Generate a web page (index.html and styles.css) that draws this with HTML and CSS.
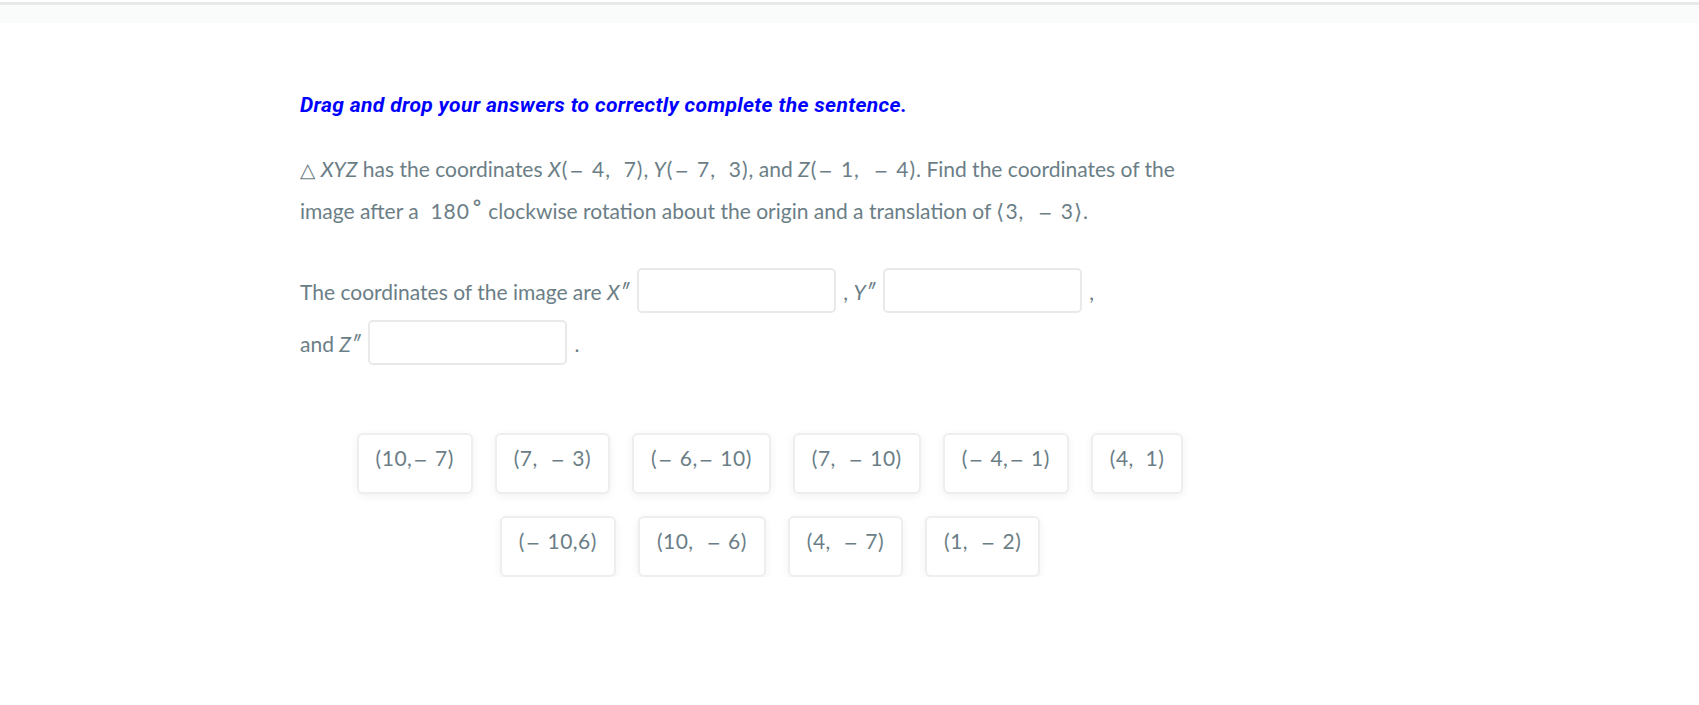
FILE: index.html
```html
<!DOCTYPE html>
<html lang="en">
<head>
<meta charset="utf-8">
<title>Drag and drop</title>
<link rel="stylesheet" href="styles.css">
</head>
<body>
<div class="topline"></div>
<div class="topband"></div>
<main class="content">
  <h1 class="instruction">Drag and drop your answers to correctly complete the sentence.</h1>
  <p class="question"><span class="tri">△</span> <i class="mi">XYZ</i> has the coordinates <span class="m"><i class="mi">X</i>(<span class="mn">−</span> 4,&nbsp; 7)</span>, <span class="m"><i class="mi">Y</i>(<span class="mn">−</span> 7,&nbsp; 3)</span>, and <span class="m"><i class="mi">Z</i>(<span class="mn">−</span> 1,&nbsp; <span class="mn">−</span> 4)</span>. Find the coordinates of the image after a <span class="m">&nbsp;180<b class="deg">°</b></span> clockwise rotation about the origin and a translation of <span class="m">⟨3,&nbsp; <span class="mn">−</span> 3⟩</span>.</p>
  <p class="sentence">The coordinates of the image are <i class="mi">X</i><span class="pp">′′</span> <span class="drop"></span> , <i class="mi">Y</i><span class="pp">′′</span> <span class="drop"></span> , <span class="nowrap">and <i class="mi">Z</i><span class="pp">′′</span> <span class="drop"></span> .</span></p>
  <div class="tiles">
    <div class="tile">(10,<span class="mn">−</span> 7)</div>
    <div class="tile">(7,&nbsp; <span class="mn">−</span> 3)</div>
    <div class="tile">(<span class="mn">−</span> 6,<span class="mn">−</span> 10)</div>
    <div class="tile">(7,&nbsp; <span class="mn">−</span> 10)</div>
    <div class="tile">(<span class="mn">−</span> 4,<span class="mn">−</span> 1)</div>
    <div class="tile">(4,&nbsp; 1)</div>
    <div class="tile">(<span class="mn">−</span> 10,6)</div>
    <div class="tile">(10,&nbsp; <span class="mn">−</span> 6)</div>
    <div class="tile">(4,&nbsp; <span class="mn">−</span> 7)</div>
    <div class="tile">(1,&nbsp; <span class="mn">−</span> 2)</div>
  </div>
</main>
</body>
</html>
```

FILE: styles.css
```css
html, body {
  margin: 0;
  padding: 0;
  background: #ffffff;
}
body {
  font-family: Lato, "Noto Sans", sans-serif;
  color: #6b7e86;
}
.topline {
  margin-top: 2px;
  height: 3px;
  background: #e8e9e9;
}
.topband {
  height: 18px;
  background: #f9fcfb;
}
.content {
  margin-left: 300px;
  width: 940px;
}
.instruction {
  margin: 68px 0 0 0;
  font-family: Roboto, "Liberation Sans", sans-serif;
  font-size: 21px;
  font-weight: 700;
  font-style: italic;
  letter-spacing: 0.35px;
  line-height: 28px;
  color: #0000ff;
}
.question {
  margin: 30px 0 0 0;
  width: 890px;
  font-size: 21px;
  line-height: 39px;
}
.m {
  letter-spacing: 1px;
}
.tri {
  font-family: "DejaVu Sans", sans-serif;
  font-size: 20px;
}
.mi {
  font-style: italic;
}
.mn {
  font-family: "DejaVu Sans", sans-serif;
  font-weight: 400;
  font-size: 17px;
  margin: 0 1px;
}
.deg {
  font-family: "DejaVu Sans", sans-serif;
  font-weight: 700;
  font-size: 20px;
  position: relative;
  top: -5px;
  margin-left: 2px;
}
.sentence {
  margin: 33px 0 0 0;
  font-size: 21px;
  line-height: 52px;
}
.pp {
  font-style: italic;
  letter-spacing: -3px;
  margin-right: 3px;
}
.nowrap {
  white-space: nowrap;
}
.drop {
  display: inline-block;
  width: 199px;
  height: 45px;
  box-sizing: border-box;
  border: 2px solid #e8eaea;
  border-radius: 5px;
  vertical-align: -13px;
  margin: 0 2px;
}
.tiles {
  margin-top: 63px;
  display: flex;
  flex-wrap: wrap;
  justify-content: center;
  gap: 22px;
}
.tile {
  height: 61px;
  box-sizing: border-box;
  padding: 10px 17px;
  font-size: 21px;
  line-height: 26px;
  letter-spacing: 0.5px;
  white-space: nowrap;
  border: 2px solid #eeeeee;
  border-radius: 6px;
  background: #ffffff;
  box-shadow: 0 2px 8px rgba(0, 0, 0, 0.06);
}
```
